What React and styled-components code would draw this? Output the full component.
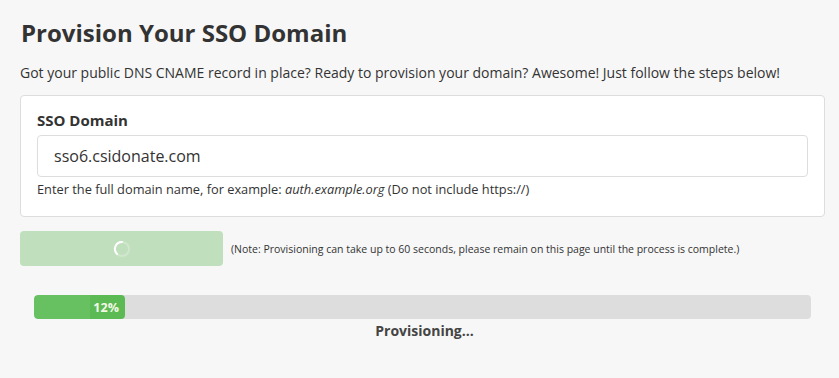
import React from 'react'
import styled, { createGlobalStyle } from 'styled-components'

const GlobalStyle = createGlobalStyle`
  body {
    margin: 0;
    background: #f7f7f7;
    font-family: "Open Sans", "Noto Sans", sans-serif;
    color: #333;
  }
`

const Page = styled.div`
  padding: 0 14px 0 20px;
`

const Title = styled.h1`
  font-size: 24px;
  font-weight: 700;
  line-height: 30px;
  margin: 18px 0 0 1px;
  color: #333;
`

const Lead = styled.p`
  font-size: 14px;
  line-height: 20px;
  margin: 15px 0 0 0;
  color: #333;
`

const Card = styled.div`
  margin-top: 12px;
  background: #fff;
  border: 1px solid #ddd;
  border-radius: 4px;
  padding: 14px 16px 18px;
`

const Label = styled.label`
  display: block;
  font-size: 15px;
  font-weight: 700;
  line-height: 20px;
  margin: 0 0 5px 0;
`

const Input = styled.input`
  box-sizing: border-box;
  width: 100%;
  height: 42px;
  padding: 0 16px;
  font-family: inherit;
  font-size: 16px;
  color: #333;
  border: 1px solid #ddd;
  border-radius: 4px;
  background: #fff;
  outline: none;
`

const Help = styled.div`
  font-size: 12.8px;
  line-height: 18px;
  margin-top: 3px;
  color: #333;
`

const ActionRow = styled.div`
  display: flex;
  align-items: center;
  gap: 8px;
  margin-top: 14px;
`

const SubmitButton = styled.button`
  width: 203px;
  height: 35px;
  border: none;
  border-radius: 4px;
  background: #c0dfbd;
  display: flex;
  align-items: center;
  justify-content: center;
  padding: 0;
`

const Note = styled.span`
  font-size: 10.5px;
  color: #333;
`

const Track = styled.div`
  margin: 29px 14px 0 14px;
  height: 24px;
  background: #ddd;
  border-radius: 4px;
  overflow: hidden;
`

const Fill = styled.div`
  height: 100%;
  border-radius: 4px;
  background: linear-gradient(to right, #68c160 0, #68c160 61%, #5cba55 61%, #5cba55 100%);
  display: flex;
  align-items: center;
  justify-content: flex-end;
  padding-right: 6px;
  box-sizing: border-box;
  font-size: 12.5px;
  font-weight: 700;
  color: #f3f8e6;
`

const Status = styled.div`
  text-align: center;
  font-size: 14px;
  font-weight: 700;
  color: #444;
  margin-top: 2px;
  padding-left: 4px;
`

const Spinner = () => (
  <svg width="18" height="18" viewBox="0 0 18 18">
    <circle cx="9" cy="9" r="7" fill="none" stroke="rgba(255,255,255,0.25)" strokeWidth="2" />
    <path d="M9 2 A7 7 0 0 0 4 14" fill="none" stroke="#fff" strokeWidth="2" strokeLinecap="round" />
  </svg>
)

export default function App() {
  const progress = 12
  return (
    <Page>
      <GlobalStyle />
      <Title>Provision Your SSO Domain</Title>
      <Lead>Got your public DNS CNAME record in place? Ready to provision your domain? Awesome! Just follow the steps below!</Lead>
      <Card>
        <Label>SSO Domain</Label>
        <Input defaultValue="sso6.csidonate.com" />
        <Help>
          Enter the full domain name, for example: <em>auth.example.org</em> (Do not include https://)
        </Help>
      </Card>
      <ActionRow>
        <SubmitButton disabled>
          <Spinner />
        </SubmitButton>
        <Note>(Note: Provisioning can take up to 60 seconds, please remain on this page until the process is complete.)</Note>
      </ActionRow>
      <Track>
        <Fill style={{ width: `${progress * 0.975}%` }}>{progress}%</Fill>
      </Track>
      <Status>Provisioning...</Status>
    </Page>
  )
}
